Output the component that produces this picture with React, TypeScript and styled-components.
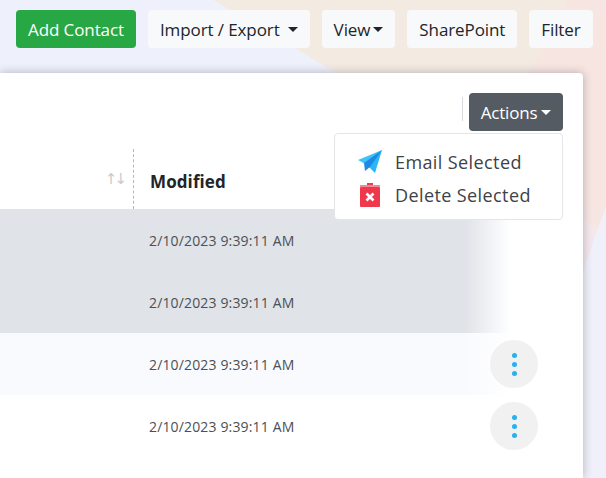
import React from "react";
import styled, { createGlobalStyle } from "styled-components";

const GlobalStyle = createGlobalStyle`
  html, body { margin: 0; padding: 0; height: 100%; overflow: hidden; }
  body { font-family: "Open Sans", "Noto Sans", sans-serif; color: #212529; }
`;

const Page = styled.div`
  width: 606px;
  height: 478px;
  overflow: hidden;
  display: flex;
  flex-direction: column;
  background:
    linear-gradient(109.5deg, transparent 0 640px, #f0f0fa 640px 100%),
    linear-gradient(118deg, transparent 0 66%, rgba(250, 225, 225, 0.55) 66% 100%),
    linear-gradient(30.7deg, #eef1fb 0 520px, #f3ebe2 520px 100%);
`;

const Toolbar = styled.div`
  display: flex;
  gap: 12px;
  padding: 10px 0 0 16px;
  height: 73px;
  box-sizing: border-box;
`;

const ToolButton = styled.button<{ $green?: boolean }>`
  height: 38px;
  padding: 0 12px;
  border: 0;
  border-radius: 4px;
  font: 400 17px "Open Sans", sans-serif;
  letter-spacing: -0.1px;
  display: flex;
  align-items: center;
  background: ${({ $green }) => ($green ? "#28a745" : "#f8f9fa")};
  color: ${({ $green }) => ($green ? "#fff" : "#212529")};
`;

const Caret = styled.span<{ $gap: number; $color?: string }>`
  margin-left: ${({ $gap }) => $gap}px;
  border-top: 5px solid ${({ $color }) => $color ?? "#212529"};
  border-left: 5px solid transparent;
  border-right: 5px solid transparent;
`;

const Card = styled.div`
  position: relative;
  width: 583px;
  flex: 1;
  background: #fff;
  border-radius: 0 4px 0 0;
  box-shadow: 0 0 10px rgba(60, 60, 80, 0.35);
`;

const CardActions = styled.div`
  height: 76px;
  box-sizing: border-box;
  padding: 20px 20px 0 0;
  display: flex;
  justify-content: flex-end;
  align-items: flex-start;
  gap: 6px;
`;

const Divider = styled.div`
  width: 1px;
  height: 24px;
  margin-top: 4px;
  background: #d5d8dc;
`;

const ActionsButton = styled.button`
  height: 38px;
  width: 94px;
  border: 0;
  border-radius: 4px;
  background: #545b62;
  color: #fff;
  font: 400 17px "Open Sans", sans-serif;
  letter-spacing: -0.2px;
  display: flex;
  align-items: center;
  justify-content: center;
`;

const Menu = styled.div`
  position: absolute;
  z-index: 3;
  top: 60px;
  left: 334px;
  width: 229px;
  height: 87px;
  box-sizing: border-box;
  padding: 11px 0 0 22px;
  background: #fff;
  border: 1px solid #e3e5e8;
  border-radius: 4px;
`;

const MenuItem = styled.div`
  display: flex;
  align-items: center;
  height: 33px;
  font-size: 18px;
  letter-spacing: 0.4px;
  color: #3d4247;
  gap: 12px;
`;

const MenuIcon = styled.svg`
  width: 26px;
  height: 26px;
  flex: none;
`;

const HeadRow = styled.div`
  display: flex;
  height: 60px;
`;

const SortCell = styled.div`
  width: 134px;
  box-sizing: border-box;
  border-right: 1px dashed #b5b8bb;
  display: flex;
  align-items: center;
  justify-content: flex-end;
  padding-right: 9px;
  color: #c8cbce;
  font: 400 15px "DejaVu Sans", sans-serif;
  letter-spacing: -3px;
`;

const HeadLabel = styled.div`
  padding: 3px 0 0 16px;
  font-size: 17px;
  font-weight: 700;
  line-height: 60px;
  letter-spacing: 0.1px;
  color: #212529;
`;

const Row = styled.div<{ $bg: string }>`
  position: relative;
  display: flex;
  align-items: center;
  height: 62px;
  padding-left: 149px;
  font-size: 14px;
  letter-spacing: 0.15px;
  color: #4b5055;
  background: ${({ $bg }) => $bg};
`;

const RowFade = styled.div`
  position: absolute;
  top: 0;
  right: 0;
  width: 118px;
  height: 100%;
  display: flex;
  align-items: center;
  padding-left: 25px;
  box-sizing: border-box;
  background: linear-gradient(90deg, transparent 0, rgba(255, 255, 255, 1) 45px);
`;

const DotsButton = styled.div`
  width: 48px;
  height: 48px;
  border-radius: 50%;
  background: #f1f1f1;
  display: flex;
  flex-direction: column;
  align-items: center;
  justify-content: center;
  gap: 4px;
`;

const Dot = styled.span`
  width: 5px;
  height: 5px;
  border-radius: 50%;
  background: #29b0ee;
`;

const rows = [
  { bg: "#e0e3e8", menu: false },
  { bg: "#e0e3e8", menu: false },
  { bg: "#f9fafe", menu: true },
  { bg: "#ffffff", menu: true },
];

export default function App() {
  return (
    <Page>
      <GlobalStyle />
      <Toolbar>
        <ToolButton $green>Add Contact</ToolButton>
        <ToolButton>
          Import / Export
          <Caret $gap={8} />
        </ToolButton>
        <ToolButton>
          View
          <Caret $gap={3} />
        </ToolButton>
        <ToolButton>SharePoint</ToolButton>
        <ToolButton>Filter</ToolButton>
      </Toolbar>
      <Card>
        <CardActions>
          <Divider />
          <ActionsButton>
            Actions
            <Caret $gap={4} $color="#fff" />
          </ActionsButton>
        </CardActions>
        <Menu>
          <MenuItem>
            <MenuIcon viewBox="0 0 26 26">
              <path d="M1 11 L25 1 L10 16 Z" fill="#3fc3f7" />
              <path d="M25 1 L10 16 L13 19 L18 24 Z" fill="#29b6f6" />
              <path d="M25 1 L7 14 L8 22 L13 18 Z" fill="#1e88e5" />
            </MenuIcon>
            Email Selected
          </MenuItem>
          <MenuItem>
            <MenuIcon viewBox="0 0 26 26">
              <path d="M10 1 H16 V3 H10 Z" fill="#ef3b4f" />
              <path d="M3 3 H23 V5 H3 Z" fill="#f08a94" />
              <rect x="3" y="5" width="20" height="20" rx="1" fill="#f0384c" />
              <path d="M9.5 11.5 L16.5 18.5 M16.5 11.5 L9.5 18.5" stroke="#fff" strokeWidth="2.6" />
            </MenuIcon>
            Delete Selected
          </MenuItem>
        </Menu>
        <HeadRow>
          <SortCell>↑↓</SortCell>
          <HeadLabel>Modified</HeadLabel>
        </HeadRow>
        {rows.map((r, i) => (
          <Row key={i} $bg={r.bg}>
            2/10/2023 9:39:11 AM
            <RowFade>
              {r.menu && (
                <DotsButton>
                  <Dot />
                  <Dot />
                  <Dot />
                </DotsButton>
              )}
            </RowFade>
          </Row>
        ))}
      </Card>
    </Page>
  );
}
